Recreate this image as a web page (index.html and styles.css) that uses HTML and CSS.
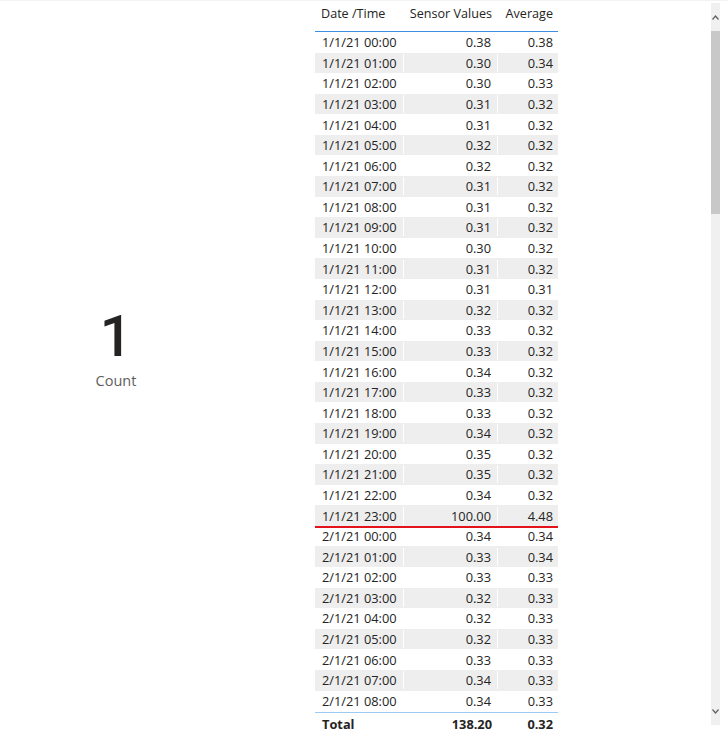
FILE: index.html
```html
<!DOCTYPE html>
<html>
<head>
<meta charset="utf-8">
<link rel="stylesheet" href="styles.css">
</head>
<body>
<div class="page">
  <div class="card">
    <div class="card-value">1</div>
    <div class="card-label">Count</div>
  </div>
  <div class="table-visual">
    <div class="row head">
      <div class="c1">Date /Time</div>
      <div class="c2">Sensor Values</div>
      <div class="c3">Average</div>
    </div>
    <div class="body" id="body">
      <div class="marker"></div>
    </div>
    <div class="row total">
      <div class="c1">Total</div>
      <div class="c2">138.20</div>
      <div class="c3">0.32</div>
    </div>
  </div>
  <div class="scrollbar">
    <div class="sb-btn">
      <svg width="7" height="5" viewBox="0 0 7 5"><path d="M0.5 4.5 L3.5 1 L6.5 4.5" fill="none" stroke="#606060" stroke-width="1.2"/></svg>
    </div>
    <div class="sb-thumb"></div>
    <div class="sb-track"></div>
    <div class="sb-btn">
      <svg width="7" height="5" viewBox="0 0 7 5"><path d="M0.5 0.5 L3.5 4 L6.5 0.5" fill="none" stroke="#606060" stroke-width="1.2"/></svg>
    </div>
  </div>
</div>
<script src="app.js"></script>
</body>
</html>
```
FILE: app.js
```js
const data = [
  ["1/1/21 00:00","0.38","0.38"],["1/1/21 01:00","0.30","0.34"],["1/1/21 02:00","0.30","0.33"],
  ["1/1/21 03:00","0.31","0.32"],["1/1/21 04:00","0.31","0.32"],["1/1/21 05:00","0.32","0.32"],
  ["1/1/21 06:00","0.32","0.32"],["1/1/21 07:00","0.31","0.32"],["1/1/21 08:00","0.31","0.32"],
  ["1/1/21 09:00","0.31","0.32"],["1/1/21 10:00","0.30","0.32"],["1/1/21 11:00","0.31","0.32"],
  ["1/1/21 12:00","0.31","0.31"],["1/1/21 13:00","0.32","0.32"],["1/1/21 14:00","0.33","0.32"],
  ["1/1/21 15:00","0.33","0.32"],["1/1/21 16:00","0.34","0.32"],["1/1/21 17:00","0.33","0.32"],
  ["1/1/21 18:00","0.33","0.32"],["1/1/21 19:00","0.34","0.32"],["1/1/21 20:00","0.35","0.32"],
  ["1/1/21 21:00","0.35","0.32"],["1/1/21 22:00","0.34","0.32"],["1/1/21 23:00","100.00","4.48"],
  ["2/1/21 00:00","0.34","0.34"],["2/1/21 01:00","0.33","0.34"],["2/1/21 02:00","0.33","0.33"],
  ["2/1/21 03:00","0.32","0.33"],["2/1/21 04:00","0.32","0.33"],["2/1/21 05:00","0.32","0.33"],
  ["2/1/21 06:00","0.33","0.33"],["2/1/21 07:00","0.34","0.33"],["2/1/21 08:00","0.34","0.33"]
];
const body = document.getElementById("body");
data.forEach((r, i) => {
  const row = document.createElement("div");
  row.className = "row data" + (i % 2 ? " alt" : "");
  row.innerHTML = '<div class="c1">' + r[0] + '</div><div class="c2">' + r[1] + '</div><div class="c3">' + r[2] + '</div>';
  body.appendChild(row);
});
```
FILE: styles.css
```css
html, body {
  margin: 0;
  padding: 0;
  background: #fff;
}
body {
  font-family: "Open Sans", "Noto Sans", sans-serif;
  color: #252423;
  width: 728px;
  height: 737px;
  overflow: hidden;
  border-top: 1px solid #f3f3f3;
  box-sizing: border-box;
}
.page {
  display: flex;
  height: 736px;
}
.card {
  width: 232px;
  display: flex;
  flex-direction: column;
  align-items: center;
  padding-top: 314px;
  box-sizing: border-box;
}
.card-value {
  font-family: Roboto, "Open Sans", sans-serif;
  font-size: 57px;
  line-height: 44px;
  font-weight: 500;
  color: #252423;
}
.card-label {
  font-size: 14.5px;
  line-height: 20px;
  color: #605e5c;
  margin-top: 12px;
}
.table-visual {
  margin-left: 83px;
  width: 243px;
  display: flex;
  flex-direction: column;
}
.row {
  display: flex;
  font-size: 12.8px;
  align-items: center;
}
.row > div {
  white-space: nowrap;
}
.c1 {
  width: 89px;
  padding-left: 7px;
  box-sizing: border-box;
}
.c2 {
  width: 94px;
  text-align: right;
  padding-right: 6px;
  box-sizing: border-box;
}
.c3 {
  width: 60px;
  text-align: right;
  padding-right: 5px;
  box-sizing: border-box;
}
.head {
  height: 26px;
  border-bottom: 1px solid #3a8ee6;
  align-items: flex-start;
  padding-top: 4px;
  box-sizing: content-box;
  font-size: 12.6px;
}
.head .c1 { padding-left: 6px; }
.body {
  position: relative;
  height: 680px;
  overflow: hidden;
}
.data {
  height: 20.58px;
}
.data.alt {
  background: #eeeeee;
}
.data.alt .c1,
.data.alt .c2 {
  border-right: 1px solid #fff;
}
.data .c1, .data .c2 {
  border-right: 1px solid transparent;
}
.marker {
  position: absolute;
  left: -1px;
  right: 0;
  top: 494px;
  height: 2px;
  background: #e3121b;
  z-index: 2;
}
.total {
  border-top: 1px solid #9ccaf2;
  height: 21px;
  font-weight: 700;
}
.scrollbar {
  margin-left: auto;
  margin-right: 8px;
  margin-top: 2px;
  width: 9px;
  height: 722px;
  background: #f0f0f0;
  display: flex;
  flex-direction: column;
}
.sb-btn {
  height: 28px;
  display: flex;
  align-items: center;
  justify-content: center;
}
.sb-thumb {
  height: 183px;
  background: #c8c8c8;
}
.sb-track {
  flex: 1;
}
```
